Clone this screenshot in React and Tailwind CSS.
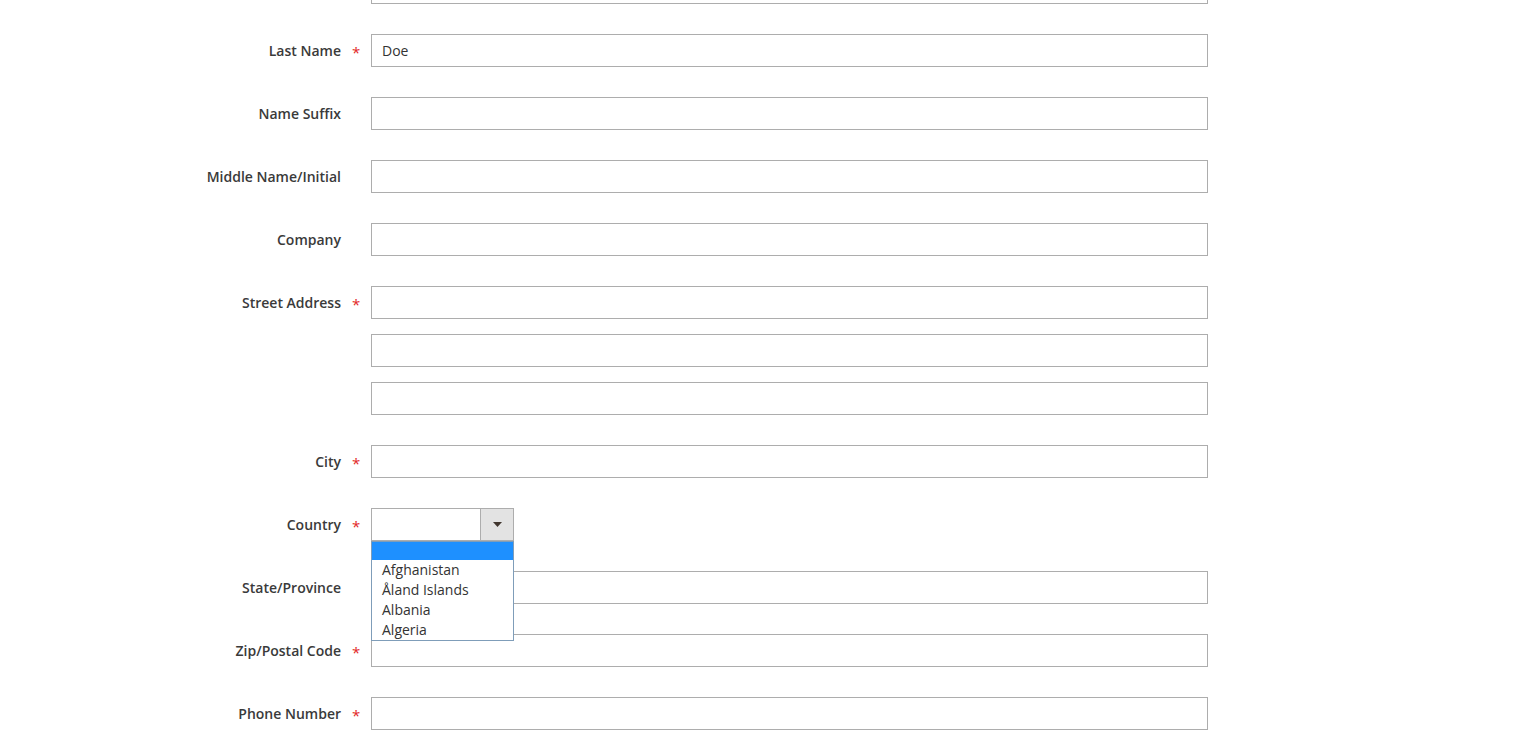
import React from "react";

function Field({ label, required, children, className = "" }) {
  return (
    <div className={"flex items-start mb-[30px] " + className}>
      <div className="w-[341px] shrink-0 text-right pt-[8px] text-[14px] leading-[18px] font-semibold text-[#3a3a3a]">
        {label}
      </div>
      <div className="h-[33px] w-[30px] shrink-0 pt-[9px] pl-[11px] text-[15px] leading-[18px] text-[#e22626]">
        {required ? "*" : null}
      </div>
      <div className="w-[837px] shrink-0">{children}</div>
    </div>
  );
}

const Input = ({ value = "", className = "" }) => (
  <div
    className={
      "h-[33px] w-full border border-[#adadad] bg-white px-[10px] text-[14px] leading-[31px] text-[#333333] " +
      className
    }
  >
    {value}
  </div>
);

export default function App() {
  return (
    <div
      className="w-[1527px] h-[745px] overflow-hidden bg-white"
      style={{ fontFamily: '"Open Sans", "Liberation Sans", sans-serif' }}
    >
      <div className="-mt-[29px]">
        <Field label="">
          <Input />
        </Field>
        <Field label="Last Name" required>
          <Input value="Doe" />
        </Field>
        <Field label="Name Suffix">
          <Input />
        </Field>
        <Field label="Middle Name/Initial">
          <Input />
        </Field>
        <Field label="Company">
          <Input />
        </Field>
        <Field label="Street Address" required>
          <div className="flex flex-col gap-[15px]">
            <Input />
            <Input />
            <Input />
          </div>
        </Field>
        <Field label="City" required>
          <Input />
        </Field>
        <Field label="Country" required className="relative z-10">
          <div className="relative w-[143px]">
            <div className="flex h-[33px] w-[143px] border border-[#adadad] bg-white">
              <div className="flex-1" />
              <div className="flex w-[33px] items-center justify-center border-l border-[#adadad] bg-[#e3e3e3]">
                <svg width="9" height="5" viewBox="0 0 9 5">
                  <path d="M0 0 L9 0 L4.5 5 Z" fill="#41362f" />
                </svg>
              </div>
            </div>
            <div className="absolute left-0 top-[33px] w-[143px] border border-[#7f9db9] bg-white">
              <div className="h-[18px] bg-[#1e90ff]" />
              {["Afghanistan", "Åland Islands", "Albania", "Algeria"].map((c) => (
                <div
                  key={c}
                  className="h-[20px] pl-[10px] text-[14px] leading-[20px] text-[#333333]"
                >
                  {c}
                </div>
              ))}
            </div>
          </div>
        </Field>
        <Field label="State/Province">
          <Input />
        </Field>
        <Field label="Zip/Postal Code" required>
          <Input />
        </Field>
        <Field label="Phone Number" required>
          <Input />
        </Field>
      </div>
    </div>
  );
}
